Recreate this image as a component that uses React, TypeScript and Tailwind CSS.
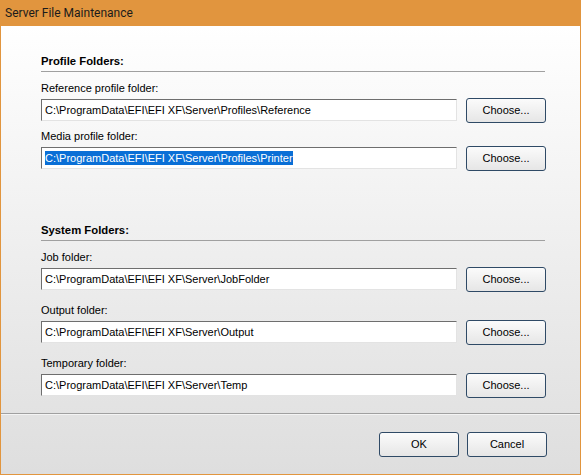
import React from "react";

const font = { fontFamily: '"Liberation Sans", Arial, sans-serif' };

function Btn({ children }: { children: React.ReactNode }) {
  return (
    <div className="w-[80px] h-[25px] shrink-0 rounded-[3px] border border-[#2f4a66] bg-gradient-to-b from-[#fbfbfb] to-[#e6e6e6] flex items-center justify-center text-[11px] text-black">
      {children}
    </div>
  );
}

function Field({
  label,
  value,
  selected,
  mt,
}: {
  label: string;
  value: string;
  selected?: boolean;
  mt: string;
}) {
  return (
    <div className={mt}>
      <div className="h-[14px] leading-[14px] text-[11px] text-black">{label}</div>
      <div className="mt-[4px] h-[22px] flex items-center gap-[9px]">
        <div className="w-[416px] h-[22px] shrink-0 bg-white border-t border-l border-t-[#6e6e6e] border-l-[#6e6e6e] border-r border-b border-r-[#e3e3e3] border-b-[#e3e3e3] flex items-center pl-[3px] text-[11px] text-black whitespace-nowrap overflow-hidden">
          {selected ? (
            <span className="bg-[#0a6fd6] text-white leading-[14px]">{value}</span>
          ) : (
            <span className="leading-[14px]">{value}</span>
          )}
        </div>
        <Btn>Choose...</Btn>
      </div>
    </div>
  );
}

function Header({ text, mt }: { text: string; mt: string }) {
  return (
    <div className={mt}>
      <div className="h-[14px] leading-[14px] text-[11.3px] font-bold text-black">{text}</div>
      <div className="mt-[3px] h-px w-[504px] bg-[#a0a0a0]" />
    </div>
  );
}

export default function App() {
  return (
    <div className="w-[581px] h-[475px] bg-[#e1953e] flex flex-col" style={font}>
      <div
        className="h-[26px] shrink-0 flex items-center pl-[5px] text-[12px] text-[#1b1b1b]"
        style={{ fontFamily: 'Roboto, "Noto Sans", sans-serif' }}
      >
        Server File Maintenance
      </div>
      <div className="mx-[1px] mb-[1px] flex-1 flex flex-col bg-gradient-to-b from-[#ffffff] to-[#dedede]">
        <div className="h-[387px] shrink-0 pl-[40px]">
          <Header text="Profile Folders:" mt="mt-[28px]" />
          <Field mt="mt-[9px]" label="Reference profile folder:" value="C:\ProgramData\EFI\EFI XF\Server\Profiles\Reference" />
          <Field mt="mt-[8px]" label="Media profile folder:" value="C:\ProgramData\EFI\EFI XF\Server\Profiles\Printer" selected />
          <Header text="System Folders:" mt="mt-[54px]" />
          <Field mt="mt-[9px]" label="Job folder:" value="C:\ProgramData\EFI\EFI XF\Server\JobFolder" />
          <Field mt="mt-[13px]" label="Output folder:" value="C:\ProgramData\EFI\EFI XF\Server\Output" />
          <Field mt="mt-[13px]" label="Temporary folder:" value="C:\ProgramData\EFI\EFI XF\Server\Temp" />
        </div>
        <div className="h-px bg-[#a0a0a0]" />
        <div className="h-px bg-[#f4f4f4]" />
        <div className="flex justify-end gap-[8px] pr-[33px] mt-[17px]">
          <Btn>OK</Btn>
          <Btn>Cancel</Btn>
        </div>
      </div>
    </div>
  );
}
